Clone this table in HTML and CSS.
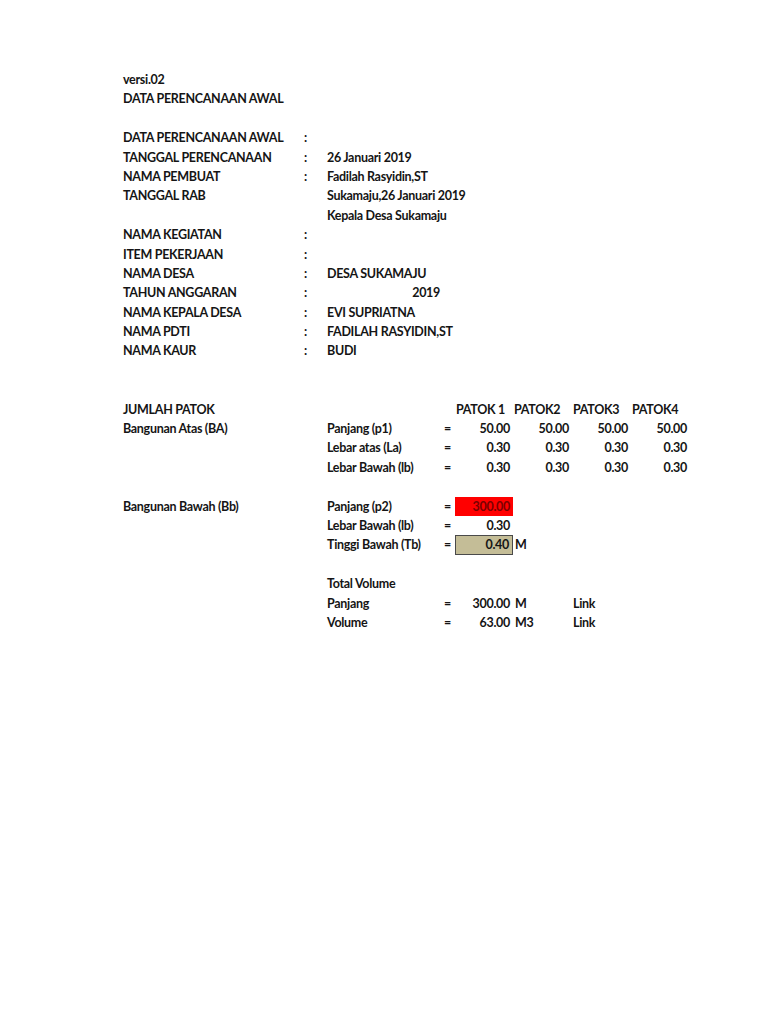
FILE: index.html
```html
<!DOCTYPE html>
<html>
<head>
<meta charset="utf-8">
<link rel="stylesheet" href="styles.css">
</head>
<body>
<div class="sheet">
  <div class="row"><div class="c a">versi.02</div></div>
  <div class="row"><div class="c a">DATA PERENCANAAN AWAL</div></div>
  <div class="row"></div>
  <div class="row"><div class="c a">DATA PERENCANAAN AWAL</div><div class="c b">:</div></div>
  <div class="row"><div class="c a">TANGGAL PERENCANAAN</div><div class="c b">:</div><div class="c cc">26 Januari 2019</div></div>
  <div class="row"><div class="c a">NAMA PEMBUAT</div><div class="c b">:</div><div class="c cc">Fadilah Rasyidin,ST</div></div>
  <div class="row"><div class="c a">TANGGAL RAB</div><div class="c b"></div><div class="c cc wide">Sukamaju,26 Januari 2019</div></div>
  <div class="row"><div class="c a"></div><div class="c b"></div><div class="c cc wide">Kepala Desa Sukamaju</div></div>
  <div class="row"><div class="c a">NAMA KEGIATAN</div><div class="c b">:</div></div>
  <div class="row"><div class="c a">ITEM PEKERJAAN</div><div class="c b">:</div></div>
  <div class="row"><div class="c a">NAMA DESA</div><div class="c b">:</div><div class="c cc">DESA SUKAMAJU</div></div>
  <div class="row"><div class="c a">TAHUN ANGGARAN</div><div class="c b">:</div><div class="c cc num">2019</div></div>
  <div class="row"><div class="c a">NAMA KEPALA DESA</div><div class="c b">:</div><div class="c cc">EVI SUPRIATNA</div></div>
  <div class="row"><div class="c a">NAMA PDTI</div><div class="c b">:</div><div class="c cc">FADILAH RASYIDIN,ST</div></div>
  <div class="row"><div class="c a">NAMA KAUR</div><div class="c b">:</div><div class="c cc">BUDI</div></div>
  <div class="row"></div>
  <div class="row"></div>
  <div class="row"><div class="c a">JUMLAH PATOK</div><div class="c b"></div><div class="c cc"></div><div class="c d"></div><div class="c e">PATOK 1</div><div class="c e">PATOK2</div><div class="c e">PATOK3</div><div class="c e">PATOK4</div></div>
  <div class="row"><div class="c a">Bangunan Atas (BA)</div><div class="c b"></div><div class="c cc">Panjang (p1)</div><div class="c d">=</div><div class="c e num">50.00</div><div class="c e num">50.00</div><div class="c e num">50.00</div><div class="c e num">50.00</div></div>
  <div class="row"><div class="c a"></div><div class="c b"></div><div class="c cc">Lebar atas (La)</div><div class="c d">=</div><div class="c e num">0.30</div><div class="c e num">0.30</div><div class="c e num">0.30</div><div class="c e num">0.30</div></div>
  <div class="row"><div class="c a"></div><div class="c b"></div><div class="c cc">Lebar Bawah (lb)</div><div class="c d">=</div><div class="c e num">0.30</div><div class="c e num">0.30</div><div class="c e num">0.30</div><div class="c e num">0.30</div></div>
  <div class="row"></div>
  <div class="row"><div class="c a">Bangunan Bawah (Bb)</div><div class="c b"></div><div class="c cc">Panjang (p2)</div><div class="c d">=</div><div class="c e num red">300.00</div></div>
  <div class="row"><div class="c a"></div><div class="c b"></div><div class="c cc">Lebar Bawah (lb)</div><div class="c d">=</div><div class="c e num">0.30</div></div>
  <div class="row"><div class="c a"></div><div class="c b"></div><div class="c cc">Tinggi Bawah (Tb)</div><div class="c d">=</div><div class="c e num tan">0.40</div><div class="c e unit">M</div></div>
  <div class="row"></div>
  <div class="row"><div class="c a"></div><div class="c b"></div><div class="c cc">Total Volume</div></div>
  <div class="row"><div class="c a"></div><div class="c b"></div><div class="c cc">Panjang</div><div class="c d">=</div><div class="c e num">300.00</div><div class="c e unit">M</div><div class="c e">Link</div></div>
  <div class="row"><div class="c a"></div><div class="c b"></div><div class="c cc">Volume</div><div class="c d">=</div><div class="c e num">63.00</div><div class="c e unit">M3</div><div class="c e">Link</div></div>
</div>
</body>
</html>
```
FILE: styles.css
```css
html, body {
  margin: 0;
  padding: 0;
  background: #ffffff;
}
body {
  font-family: Lato, "Open Sans", sans-serif;
  font-size: 12.5px;
  font-weight: 700;
  letter-spacing: -0.3px;
  color: #151515;
}
.sheet {
  padding: 70px 0 0 120px;
}
.row {
  display: grid;
  grid-template-columns: 182px 23px 118px 12px 58px 59px 59px 59px;
  height: 19.4px;
  align-items: center;
}
.c {
  padding: 0 3px;
  white-space: nowrap;
  line-height: 19px;
  box-sizing: border-box;
  height: 19.4px;
}
.b { padding-left: 2px; }
.cc { padding-left: 2px; }
.d { padding: 0 0 0 1px; }
.e { padding-left: 1px; }
.num { text-align: right; padding-right: 3px; }
.unit { padding-left: 2px; }
.red {
  background: #ff0000;
  color: #7a0000;
}
.tan {
  background: #c4bd97;
  border: 1px solid #4a4a4a;
  line-height: 17px;
}
```
